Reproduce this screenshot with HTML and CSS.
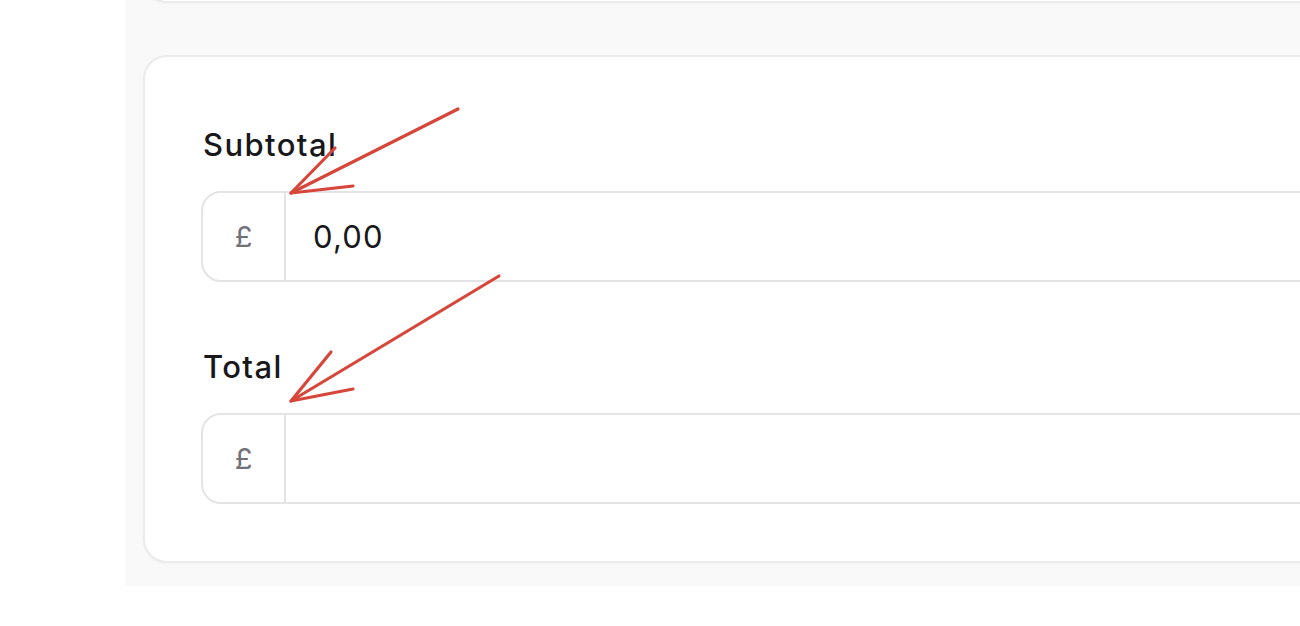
FILE: index.html
```html
<!DOCTYPE html>
<html lang="en">

<head>
    <meta charset="UTF-8">
    <meta name="viewport" content="width=device-width, initial-scale=1.0">
    <title>Totals</title>
    <link rel="stylesheet" href="styles.css">
</head>

<body>
    <div class="layout">
        <!-- left gutter -->
        <div class="sidebar"></div>

        <!-- main panel -->
        <div class="main">
            <div class="card card-prev"></div>

            <div class="card card-totals">
                <div class="field">
                    <label class="field-label" for="subtotal">Subtotal</label>
                    <div class="money-input">
                        <span class="money-prefix">£</span>
                        <input id="subtotal" class="money-value" type="text" value="0,00">
                    </div>
                </div>

                <div class="field">
                    <label class="field-label" for="total">Total</label>
                    <div class="money-input">
                        <span class="money-prefix">£</span>
                        <input id="total" class="money-value" type="text" value="">
                    </div>
                </div>
            </div>
        </div>
    </div>

    <!-- annotation arrows -->
    <svg class="annotations" width="1300" height="626" viewBox="0 0 1300 626">
        <g fill="none" stroke="#d6463b" stroke-width="3.2" stroke-linecap="round" stroke-linejoin="round">
            <path d="M458 109 L291 193" />
            <path d="M335 148 L291 193 L353 186" />
            <path d="M499 276 L291 401" />
            <path d="M331 352 L291 401 L353 389" />
        </g>
    </svg>
</body>

</html>
```

FILE: styles.css
```css
body {
    margin: 0;
    padding: 0;
    overflow: hidden;
    background-color: #fff;
    font-family: Inter, "Noto Sans", sans-serif;
    color: #18181b;
}

.layout {
    display: flex;
    flex-flow: row nowrap;
    height: 626px;
}

.sidebar {
    width: 125px;
    flex-shrink: 0;
}

.main {
    flex: 1;
    height: 586px;
    padding-left: 18px;
    background-color: #f9f9f9;
    overflow: hidden;
}

.card {
    width: 1300px;
    background-color: #fff;
    border: 2px solid #ebebeb;
    border-radius: 24px;
    box-shadow: 0 1px 2px rgba(0, 0, 0, 0.03);
}

.card-prev {
    height: 60px;
    margin-top: -61px;
}

.card-totals {
    margin-top: 52px;
    padding: 68px 0 57px 56px;
    display: flex;
    flex-direction: column;
    gap: 65px;
}

.field {
    display: flex;
    flex-direction: column;
    gap: 26px;
}

.field-label {
    font-size: 31px;
    line-height: 40px;
    font-weight: 500;
    letter-spacing: 1.4px;
    padding-left: 2px;
}

.money-input {
    display: flex;
    flex-flow: row nowrap;
    height: 87px;
    border: 2px solid #e4e4e7;
    border-radius: 20px;
    background-color: #fff;
    overflow: hidden;
}

.money-prefix {
    width: 81px;
    flex-shrink: 0;
    display: flex;
    align-items: center;
    justify-content: center;
    border-right: 2px solid #e4e4e7;
    font-size: 29px;
    color: #71717a;
}

.money-value {
    flex: 1;
    border: none;
    outline: none;
    padding: 0 0 0 27px;
    background: transparent;
    font-family: inherit;
    font-size: 31px;
    letter-spacing: 1.2px;
    color: #18181b;
}

.annotations {
    position: absolute;
    top: 0;
    left: 0;
    pointer-events: none;
}
```
